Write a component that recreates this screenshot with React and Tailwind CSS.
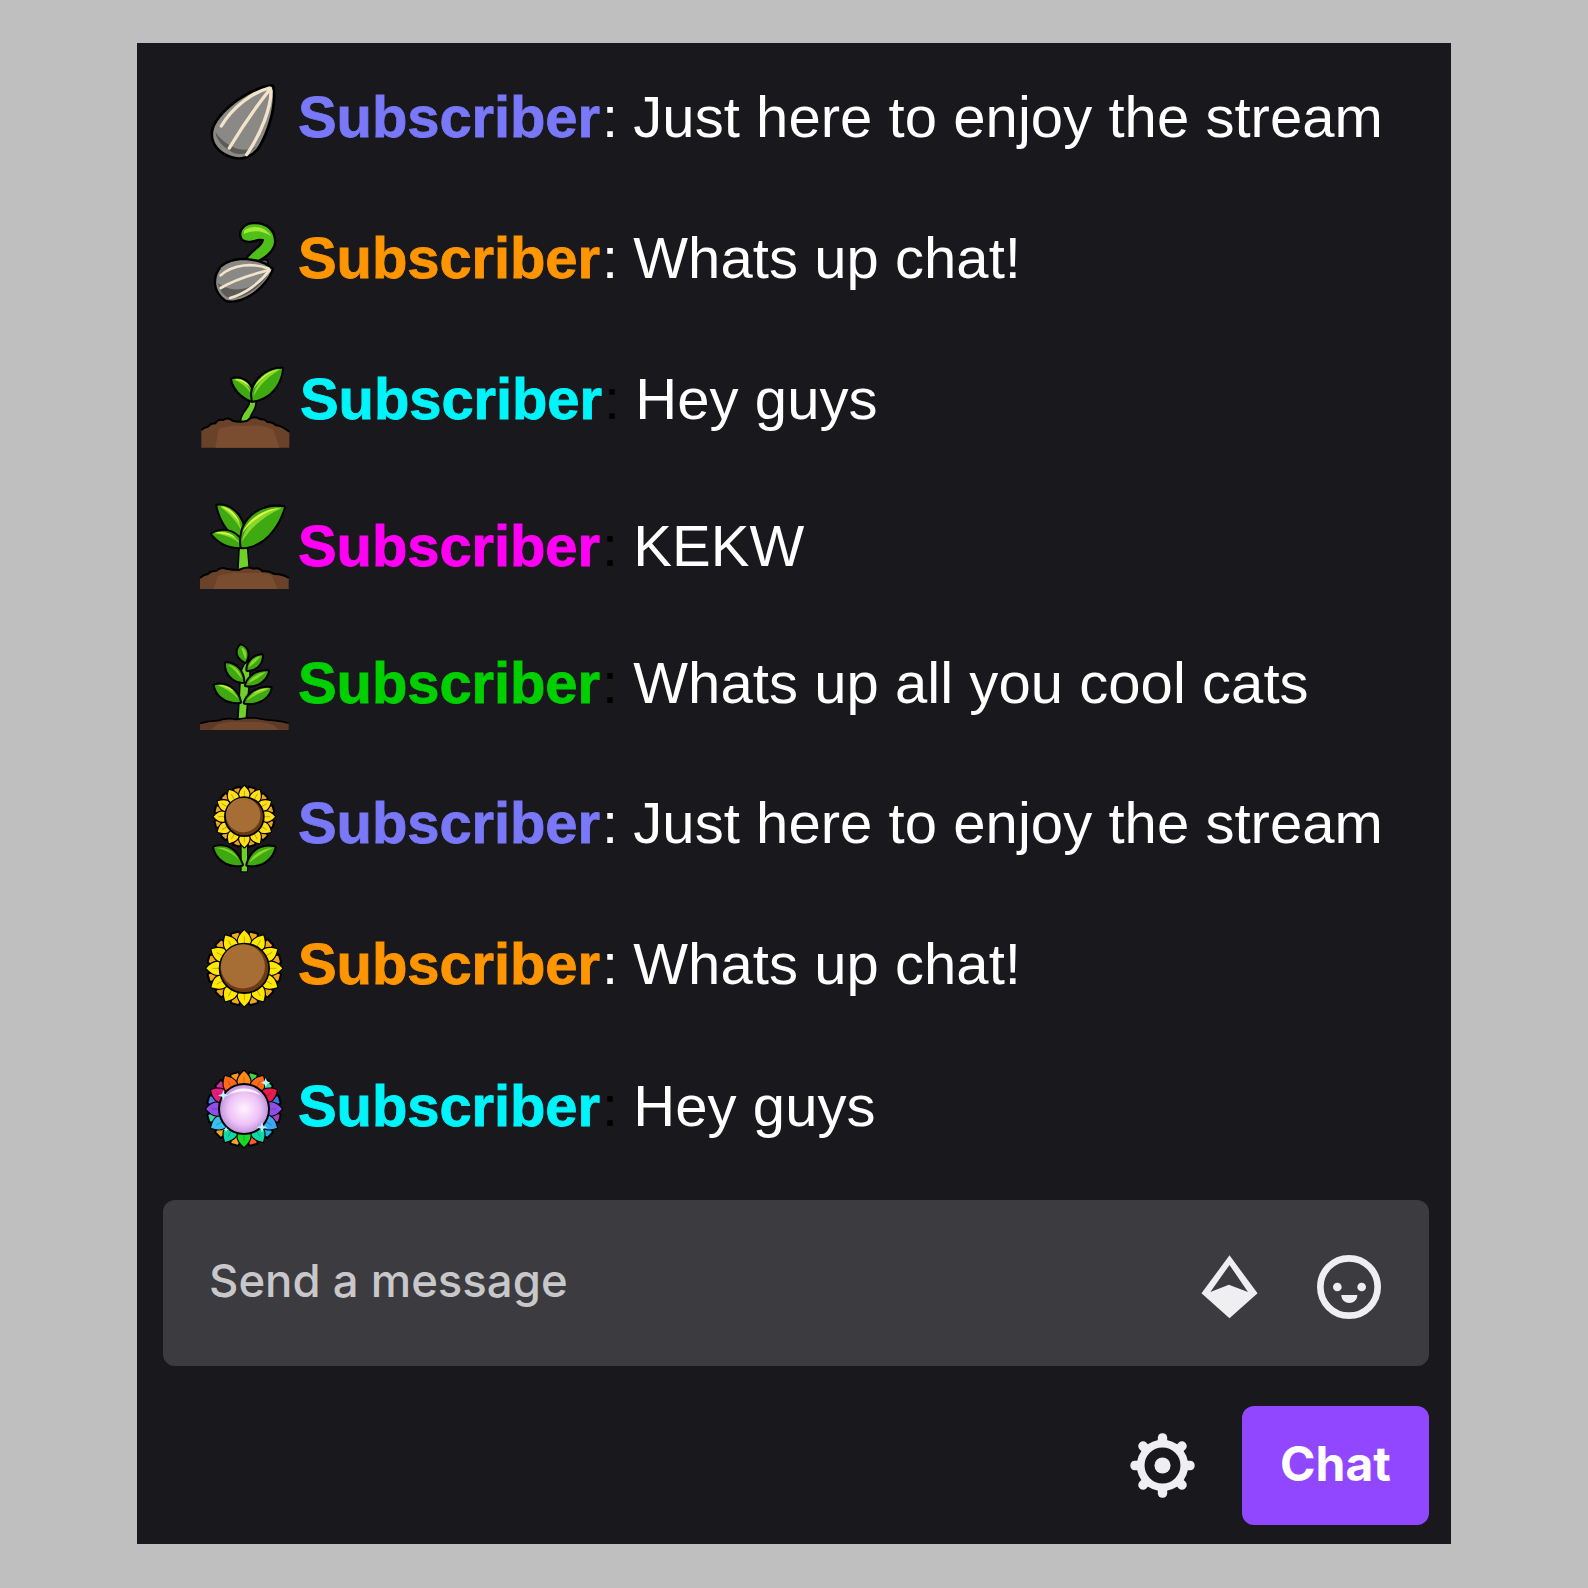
import React from "react";

const GREEN = "#3fa912";
const BRIGHT = "#86d82a";
const RIM = "#dcf548";

function Leaf({ d, band, rim, w = 12 }) {
  return (
    <g>
      <path d={d} fill={GREEN} stroke="#000" strokeWidth={w} strokeLinejoin="round" paintOrder="stroke" />
      {band && <path d={band} fill={BRIGHT} />}
      {rim && <path d={rim} fill={RIM} />}
    </g>
  );
}

function Seed() {
  return (
    <svg width="90" height="90" viewBox="30 6 270 270" className="overflow-visible shrink-0">
      <path d="M246 50C256 100 234 178 206 226C186 260 150 270 116 254C82 240 62 210 72 176C92 122 180 58 246 50Z" fill="#8b8985" stroke="#000" strokeWidth="16" strokeLinejoin="round" paintOrder="stroke" />
      <path d="M76 186C80 214 104 236 130 248C158 258 184 250 200 228C170 252 112 238 76 186Z" fill="#5d5b58" />
      <g fill="none" stroke="#f2e4cb" strokeWidth="10" strokeLinecap="round">
        <path d="M238 54C190 66 128 110 94 168" />
        <path d="M241 56C206 100 158 168 118 234" />
        <path d="M243 62C244 110 214 190 170 254" />
      </g>
    </svg>
  );
}

function Sprout() {
  return (
    <svg width="90" height="90" viewBox="30 429 270 270" className="overflow-visible shrink-0">
      <path d="M170 570C185 545 222 530 222 508C205 500 180 520 160 508C145 490 160 465 190 463C225 460 252 480 252 515C250 545 215 565 190 578Z" fill="#4fbf1a" stroke="#000" strokeWidth="14" strokeLinejoin="round" paintOrder="stroke" />
      <path d="M162 482C186 464 226 468 244 500C222 482 190 478 162 492Z" fill="#a4e83a" />
      <path d="M216 568L232 570L236 588L210 588Z" fill="#555" stroke="#000" strokeWidth="5" />
      <path d="M245 598C205 565 130 560 95 592C70 622 72 665 110 690C160 700 225 650 245 598Z" fill="#8b8985" stroke="#000" strokeWidth="14" strokeLinejoin="round" paintOrder="stroke" />
      <path d="M84 640C90 670 110 685 128 686C170 680 210 650 232 618C190 655 130 675 84 640Z" fill="#5d5b58" />
      <g fill="none" stroke="#f2e4cb" strokeWidth="8" strokeLinecap="round">
        <path d="M236 596C190 578 130 582 92 616" />
        <path d="M238 600C190 612 140 626 92 654" />
        <path d="M238 602C210 638 165 672 120 684" />
      </g>
    </svg>
  );
}

const top3 = "M34 240Q42 232 54 230Q62 220 76 220Q84 206 100 210Q112 200 128 212Q150 218 172 212Q190 194 212 208Q224 206 232 216Q248 216 258 226Q276 228 298 245";
const top4 = "M30 684Q40 674 54 672Q62 662 80 662Q92 650 108 656Q130 660 146 660Q170 648 190 656Q208 652 218 664Q240 662 252 672Q280 672 296 684";
const top5 = "M30 280Q56 272 84 272Q110 262 140 268Q170 262 196 264Q226 270 256 272Q280 274 296 280";

function Seedling() {
  return (
    <svg width="90" height="90" viewBox="30 12 270 270" className="overflow-visible shrink-0">
      <path d="M178 148C190 170 156 182 154 214L176 214C176 192 202 176 194 148Z" fill="#6fd02a" stroke="#000" strokeWidth="10" strokeLinejoin="round" paintOrder="stroke" />
      <Leaf d="M126 88C152 78 182 96 186 126L184 152C156 140 132 118 126 88Z"
        band="M132 90C152 86 176 100 184 132C168 108 150 96 132 90Z" rim="M132 88C150 84 172 94 180 112C165 98 150 92 132 88Z" />
      <Leaf d="M276 56C232 54 190 90 186 132L188 152C236 146 272 106 276 56Z"
        band="M190 140C196 100 232 64 272 58C240 76 208 104 190 140Z" rim="M190 118C202 86 236 60 270 58C238 66 208 90 190 118Z" />
      <path d={`${top3}L298 293L34 293Z`} fill="#6a4229" />
      <path d={top3} fill="none" stroke="#000" strokeWidth="6" />
      <path d="M76 293L86 236Q130 222 170 228Q220 222 250 240L268 293Z" fill="#7a4d31" />
    </svg>
  );
}

function Plant() {
  return (
    <svg width="90" height="90" viewBox="30 453 270 270" className="overflow-visible shrink-0">
      <path d="M146 662L150 586L170 586L176 662Z" fill="#6fd02a" stroke="#000" strokeWidth="8" strokeLinejoin="round" paintOrder="stroke" />
      <Leaf d="M82 467C116 462 150 490 160 530C158 550 152 560 150 568C116 550 90 510 82 467Z"
        band="M90 470C118 470 148 498 156 545C140 512 114 488 90 470Z" rim="M92 469C116 470 140 490 150 520C134 498 114 480 92 469Z" />
      <Leaf d="M66 552C96 535 130 540 152 570L150 592C114 592 86 576 66 552Z"
        band="M72 550C100 540 130 548 150 580C126 562 100 554 72 550Z" rim="M74 549C100 541 122 548 138 564C118 554 96 550 74 549Z" />
      <Leaf d="M282 472C230 462 175 490 158 540C152 565 152 580 155 592C215 590 262 540 282 472Z"
        band="M156 575C164 520 220 478 276 474C228 496 186 526 156 575Z" rim="M158 548C172 508 224 474 274 473C226 484 184 512 158 548Z" />
      <path d={`${top4}L296 717L30 717Z`} fill="#6a4229" />
      <path d={top4} fill="none" stroke="#000" strokeWidth="6" />
      <path d="M70 717L84 678Q130 664 170 670Q220 664 246 678L262 717Z" fill="#7a4d31" />
    </svg>
  );
}

function Tree() {
  return (
    <svg width="90" height="90" viewBox="30 24 270 270" className="overflow-visible shrink-0">
      <path d="M146 270L154 130C158 112 166 102 172 92L178 132L166 270Z" fill="#6fd02a" stroke="#000" strokeWidth="9" strokeLinejoin="round" paintOrder="stroke" />
      <Leaf d="M152 46C174 52 178 78 166 96C144 86 134 64 152 46Z" band="M154 52C168 58 172 74 166 88C160 74 156 62 154 52Z" />
      <Leaf d="M216 76C216 104 196 120 172 120C172 96 190 78 216 76Z" band="M176 112C180 96 194 82 212 78C202 92 190 102 176 112Z" />
      <Leaf d="M108 100C136 100 160 124 160 156C130 156 106 130 108 100Z" band="M114 104C134 106 152 124 156 148C142 128 130 116 114 104Z" />
      <Leaf d="M234 124C226 156 196 170 168 166C174 140 204 120 234 124Z" band="M174 160C184 142 206 128 228 126C212 140 196 150 174 160Z" />
      <Leaf d="M74 166C106 156 144 180 150 216C110 220 80 198 74 166Z" band="M82 166C106 164 134 180 146 208C126 188 106 174 82 166Z" rim="M84 165C104 164 122 172 134 186C118 176 102 170 84 165Z" />
      <Leaf d="M242 174C236 206 200 224 164 218C174 190 210 168 242 174Z" band="M170 212C184 190 210 176 238 176C216 186 192 196 170 212Z" rim="M182 194C198 182 218 175 238 175C218 180 198 186 182 194Z" />
      <path d={`${top5}L296 300L30 300Z`} fill="#5f3b26" />
      <path d={top5} fill="none" stroke="#000" strokeWidth="5" />
      <path d="M62 300L82 282Q130 272 170 276Q216 272 248 284L268 300Z" fill="#70472f" />
    </svg>
  );
}

const angles = Array.from({ length: 12 }, (_, i) => i * 30);

function Petals({ cx, cy, r, colors, backs, veins, k = 1 }) {
  const petal = `M0 ${-r}C${25 * k} ${-r + 22 * k} ${28 * k} ${-r + 44 * k} 0 ${-r + 66 * k}C${-28 * k} ${-r + 44 * k} ${-25 * k} ${-r + 22 * k} 0 ${-r}Z`;
  const back = `M${-10 * k} ${-r + 6 * k}L${10 * k} ${-r + 6 * k}L${17 * k} ${-r + 50 * k}L${-17 * k} ${-r + 50 * k}Z`;
  return (
    <g transform={`translate(${cx} ${cy})`}>
      {angles.map((a, i) => (
        <path key={a} d={back} transform={`rotate(${a + 15})`} fill={backs[i % backs.length]} stroke="#000" strokeWidth="12" strokeLinejoin="round" paintOrder="stroke" />
      ))}
      {angles.map((a, i) => (
        <g key={a} transform={`rotate(${a})`}>
          <path d={petal} fill={colors[i % colors.length]} stroke="#000" strokeWidth="7" strokeLinejoin="round" paintOrder="stroke" />
          <path d={`M0 ${-r + 18 * k}L0 ${-r + 50 * k}`} stroke={veins} strokeWidth="2.5" />
        </g>
      ))}
    </g>
  );
}

function Disc({ cx, cy, r }) {
  return (
    <g>
      <circle cx={cx} cy={cy} r={r + 5} fill="#000" />
      <circle cx={cx} cy={cy} r={r} fill="#6a3a16" />
      <circle cx={cx - r * 0.06} cy={cy - r * 0.08} r={r * 0.92} fill="#a66d35" />
    </g>
  );
}

function Sunflower() {
  return (
    <svg width="90" height="90" viewBox="30 444 270 270" className="overflow-visible shrink-0">
      <path d="M155 640L171 640L171 724L155 724Z" fill="#6fd02a" stroke="#000" strokeWidth="6" paintOrder="stroke" />
      <Leaf d="M156 704C138 656 106 642 72 652C80 688 116 712 156 704Z" band="M80 654C106 650 130 662 146 688C126 668 106 660 80 654Z" />
      <Leaf d="M172 704C182 664 216 642 254 652C246 688 212 712 172 704Z" band="M178 698C190 672 216 656 248 654C222 666 200 680 178 698Z" />
      <Petals cx={163} cy={560} r={92} colors={["#ffe11a"]} backs={["#eca51e"]} veins="#b89a10" k={0.78} />
      <Disc cx={163} cy={560} r={56} />
    </svg>
  );
}

function Sun() {
  return (
    <svg width="90" height="90" viewBox="30 -3 270 270" className="overflow-visible shrink-0">
      <Petals cx={163} cy={145} r={114} colors={["#ffe800"]} backs={["#f5a81a"]} veins="#b8a000" />
      <Disc cx={163} cy={145} r={72} />
    </svg>
  );
}

function Rainbow() {
  return (
    <svg width="90" height="90" viewBox="30 423 270 270" className="overflow-visible shrink-0">
      <defs>
        <radialGradient id="orb" cx="0.5" cy="0.5" r="0.55">
          <stop offset="0" stopColor="#fff2ff" />
          <stop offset="0.6" stopColor="#eec2f5" />
          <stop offset="1" stopColor="#b48ad8" />
        </radialGradient>
      </defs>
      <Petals cx={162} cy={567} r={114} veins="#00000040"
        colors={["#ff8a18", "#ff6a18", "#e81c4c", "#9050e8", "#38a8f0", "#10d8a8", "#18d828", "#10d8a8", "#38c0f0", "#9050e8", "#e81c7c", "#ff6a18"]}
        backs={["#40d050", "#40d8a0", "#3878e8", "#b040c0", "#18b8e8", "#ff5a20", "#f0a818", "#f0a818", "#38d8a8", "#5080f0", "#d030a0", "#ff9a18"]} />
      <circle cx="162" cy="567" r="78" fill="#000" />
      <circle cx="162" cy="567" r="72" fill="url(#orb)" />
      <path d="M112 528C135 498 190 498 214 528C190 510 135 510 112 528Z" fill="#fff" opacity=".85" />
      <g fill="#b8fbff">
        <path d="M100 510L104 522L116 526L104 530L100 542L96 530L84 526L96 522Z" />
        <path d="M227 474L231 484L241 488L231 492L227 502L223 492L213 488L223 484Z" />
        <path d="M216 606L220 618L232 622L220 626L216 638L212 626L200 622L212 618Z" />
        <path d="M108 620L111 626L117 628L111 630L108 636L105 630L99 628L105 626Z" />
      </g>
    </svg>
  );
}

function Diamond() {
  return (
    <svg width="57" height="64" viewBox="304 106 172 194" className="shrink-0">
      <path fillRule="evenodd" fill="#efeff1" d="M390 107L475 222L390 298L305 222ZM390 136L332 218L388 196L446 218Z" />
    </svg>
  );
}

function Smile() {
  return (
    <svg width="64" height="64" viewBox="651 106 192 192" className="shrink-0">
      <circle cx="747" cy="202" r="86" fill="none" stroke="#efeff1" strokeWidth="20" />
      <circle cx="712" cy="202" r="13" fill="#efeff1" />
      <circle cx="785" cy="202" r="13" fill="#efeff1" />
      <path d="M724 226L772 226C772 258 724 258 724 226Z" fill="#efeff1" />
    </svg>
  );
}

function Gear() {
  const teeth = [0, 45, 90, 135, 180, 225, 270, 315];
  return (
    <svg width="65" height="65" viewBox="90 640 194 194" className="shrink-0">
      {teeth.map((a) => (
        <rect key={a} x="173" y="641" width="28" height="36" rx="13" fill="#efeff1" transform={`rotate(${a} 187 737)`} />
      ))}
      <circle cx="187" cy="737" r="65" fill="none" stroke="#efeff1" strokeWidth="23" />
      <circle cx="187" cy="737" r="24" fill="#efeff1" />
    </svg>
  );
}

function Row({ icon, color, colon, text, className, nameClass = "ml-[8px]" }) {
  return (
    <div className={`flex items-center h-[90px] pl-[63px] ${className}`}>
      {icon}
      <p className={`whitespace-pre text-[58px] leading-none font-['Liberation_Sans',Arial,sans-serif] ${nameClass}`}>
        <span className={`font-bold tracking-[-0.1px] [-webkit-text-stroke:0.8px] ${color}`}>Subscriber</span>
        <span className={`ml-[2px] ${colon}`}>:</span>
        <span className="-ml-[1px] tracking-[0.06px] text-white"> {text}</span>
      </p>
    </div>
  );
}

export default function App() {
  return (
    <div className="w-[1588px] h-[1588px] bg-[#bfbfbf] pt-[43px] pl-[137px]">
      <div className="w-[1314px] h-[1501px] bg-[#18181d] pt-[29px] flex flex-col">
        <Row icon={<Seed />} color="text-[#7878f8]" colon="text-white" text="Just here to enjoy the stream" className="" />
        <Row icon={<Sprout />} color="text-[#ff9500]" colon="text-white" text="Whats up chat!" className="mt-[51px]" />
        <Row icon={<Seedling />} color="text-[#00f5fa]" colon="text-black" text="Hey guys" className="mt-[51px]" nameClass="ml-[10px]" />
        <Row icon={<Plant />} color="text-[#ff00f5]" colon="text-black" text="KEKW" className="mt-[57px]" />
        <Row icon={<Tree />} color="text-[#00d000]" colon="text-black" text="Whats up all you cool cats" className="mt-[47px]" />
        <Row icon={<Sunflower />} color="text-[#7878f8]" colon="text-white" text="Just here to enjoy the stream" className="mt-[50px]" />
        <Row icon={<Sun />} color="text-[#ff9500]" colon="text-white" text="Whats up chat!" className="mt-[51px]" />
        <Row icon={<Rainbow />} color="text-[#00f5fa]" colon="text-black" text="Hey guys" className="mt-[52px]" />

        <div className="mt-[49px] ml-[26px] w-[1266px] h-[166px] rounded-xl bg-[#3b3b40] flex items-center pl-[46px] pr-[48px]">
          <span className="text-[45.5px] leading-none font-medium text-[#c8c8ca] font-['Inter',sans-serif] -mt-1">Send a message</span>
          <div className="ml-auto flex items-center gap-[59px] mt-2">
            <Diamond />
            <Smile />
          </div>
        </div>

        <div className="mt-[40px] mr-[22px] flex items-center justify-end gap-[47px]">
          <Gear />
          <div className="w-[187px] h-[119px] rounded-xl bg-[#9147ff] flex items-center justify-center">
            <span className="text-[48px] leading-none font-bold text-white font-['Inter',sans-serif] -mt-1">Chat</span>
          </div>
        </div>
      </div>
    </div>
  );
}
